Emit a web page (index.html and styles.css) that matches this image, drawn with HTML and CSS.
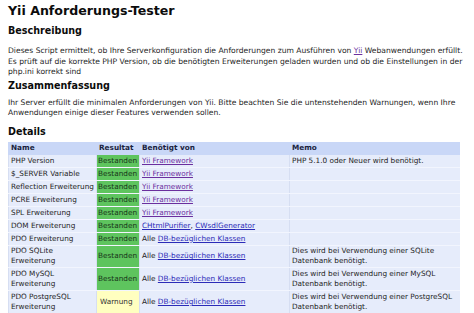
FILE: index.html
```html
<!DOCTYPE html>
<html lang="de">
<head>
<meta charset="utf-8">
<title>Yii Anforderungs-Tester</title>
<link rel="stylesheet" href="styles.css">
</head>
<body>
<div class="page">
  <h1>Yii Anforderungs-Tester</h1>
  <h2>Beschreibung</h2>
  <p class="text">Dieses Script ermittelt, ob Ihre Serverkonfiguration die Anforderungen zum Ausführen von <a class="visited" href="#">Yii</a> Webanwendungen erfüllt. Es prüft auf die korrekte PHP Version, ob die benötigten Erweiterungen geladen wurden und ob die Einstellungen in der php.ini korrekt sind</p>
  <h2 class="h-sum">Zusammenfassung</h2>
  <p class="text text-sum">Ihr Server erfüllt die minimalen Anforderungen von Yii. Bitte beachten Sie die untenstehenden Warnungen, wenn Ihre Anwendungen einige dieser Features verwenden sollen.</p>
  <h2 class="h-det">Details</h2>
  <table class="result">
    <colgroup>
      <col class="c-name"><col class="c-res"><col class="c-req"><col class="c-memo">
    </colgroup>
    <tr class="head"><th>Name</th><th>Resultat</th><th>Benötigt von</th><th>Memo</th></tr>
    <tr><td>PHP Version</td><td class="passed">Bestanden</td><td><a class="visited" href="#">Yii Framework</a></td><td>PHP 5.1.0 oder Neuer wird benötigt.</td></tr>
    <tr><td>$_SERVER Variable</td><td class="passed">Bestanden</td><td><a class="visited" href="#">Yii Framework</a></td><td></td></tr>
    <tr><td>Reflection Erweiterung</td><td class="passed">Bestanden</td><td><a class="visited" href="#">Yii Framework</a></td><td></td></tr>
    <tr><td>PCRE Erweiterung</td><td class="passed">Bestanden</td><td><a class="visited" href="#">Yii Framework</a></td><td></td></tr>
    <tr><td>SPL Erweiterung</td><td class="passed">Bestanden</td><td><a class="visited" href="#">Yii Framework</a></td><td></td></tr>
    <tr><td>DOM Erweiterung</td><td class="passed">Bestanden</td><td><a href="#">CHtmlPurifier</a>, <a href="#">CWsdlGenerator</a></td><td></td></tr>
    <tr><td>PDO Erweiterung</td><td class="passed">Bestanden</td><td>Alle <a href="#">DB-bezüglichen Klassen</a></td><td></td></tr>
    <tr class="tall"><td>PDO SQLite<br>Erweiterung</td><td class="passed">Bestanden</td><td>Alle <a href="#">DB-bezüglichen Klassen</a></td><td>Dies wird bei Verwendung einer SQLite<br>Datenbank benötigt.</td></tr>
    <tr class="tall"><td>PDO MySQL<br>Erweiterung</td><td class="passed">Bestanden</td><td>Alle <a href="#">DB-bezüglichen Klassen</a></td><td>Dies wird bei Verwendung einer MySQL<br>Datenbank benötigt.</td></tr>
    <tr class="tall last"><td>PDO PostgreSQL<br>Erweiterung</td><td class="warning">Warnung</td><td>Alle <a href="#">DB-bezüglichen Klassen</a></td><td>Dies wird bei Verwendung einer PostgreSQL<br>Datenbank benötigt.</td></tr>
  </table>
</div>
</body>
</html>
```

FILE: styles.css
```css
html, body {
  margin: 0;
  padding: 0;
  background: #ffffff;
}
body {
  font-family: "DejaVu Sans", Verdana, sans-serif;
  font-size: 7.6px;
  color: #1e1e1e;
}
.page {
  padding: 0 8px;
  width: 458px;
}
h1 {
  font-size: 12.6px;
  font-weight: bold;
  margin: 0;
  padding-top: 3px;
  line-height: 15px;
  color: #0c0c0c;
}
h2 {
  font-size: 9.6px;
  font-weight: bold;
  margin: 7px 0 0 0;
  line-height: 12px;
  color: #0c0c0c;
}
.text {
  margin: 9px 0 0 0;
  line-height: 10.5px;
}
.h-sum { margin-top: 2px; }
.text-sum { margin-top: 6px; }
.h-det { margin-top: 7px; }
a {
  color: #2b2bb8;
  text-decoration: underline;
}
a.visited {
  color: #6b2f9e;
}
table.result {
  margin-top: 4px;
  border-collapse: collapse;
  width: 451px;
  table-layout: fixed;
  background: #e6ecfb;
  font-size: 7.3px;
}
.c-name { width: 88px; }
.c-res { width: 43px; }
.c-req { width: 150px; }
.c-memo { width: 170px; }
table.result th, table.result td {
  text-align: left;
  padding: 0 2px;
  height: 12px;
  line-height: 10px;
  border-top: 1px solid #f2f5fe;
  border-bottom: 1px solid #f2f5fe;
  border-left: 1px solid #d6def2;
  white-space: nowrap;
  overflow: hidden;
  vertical-align: middle;
}
table.result tr.head th {
  background: #c9d7f7;
  color: #1a1f40;
  height: 11px;
  border-color: #c9d7f7;
}
table.result tr.tall td {
  height: 21.5px;
}
table.result tr.last td {
  height: 23px;
}
table.result td.passed {
  background: #5ec45e;
  color: #18341a;
  padding: 0 1px;
}
table.result td.warning {
  background: #ffffc0;
  color: #333;
  padding: 0 1px 0 3px;
}
```
